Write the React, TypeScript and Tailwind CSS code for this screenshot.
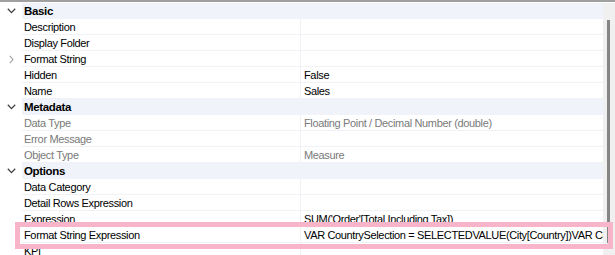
import { ReactNode } from "react"

type Row =
  | { kind: "group"; label: string }
  | { kind: "prop"; label: string; value?: string; muted?: boolean; expandable?: boolean }

const rows: Row[] = [
  { kind: "group", label: "Basic" },
  { kind: "prop", label: "Description" },
  { kind: "prop", label: "Display Folder" },
  { kind: "prop", label: "Format String", expandable: true },
  { kind: "prop", label: "Hidden", value: "False" },
  { kind: "prop", label: "Name", value: "Sales" },
  { kind: "group", label: "Metadata" },
  { kind: "prop", label: "Data Type", value: "Floating Point / Decimal Number (double)", muted: true },
  { kind: "prop", label: "Error Message", muted: true },
  { kind: "prop", label: "Object Type", value: "Measure", muted: true },
  { kind: "group", label: "Options" },
  { kind: "prop", label: "Data Category" },
  { kind: "prop", label: "Detail Rows Expression" },
  { kind: "prop", label: "Expression", value: "SUM('Order'[Total Including Tax])" },
  {
    kind: "prop",
    label: "Format String Expression",
    value: "VAR CountrySelection = SELECTEDVALUE(City[Country])VAR CountryFormat = ",
  },
  { kind: "prop", label: "KPI" },
]

function ChevronDown() {
  return (
    <svg width="9" height="6" viewBox="0 0 9 6" className="text-[#404040]">
      <path d="M0.8 0.8 L4.5 4.6 L8.2 0.8" fill="none" stroke="currentColor" strokeWidth="1.3" />
    </svg>
  )
}

function ChevronRight() {
  return (
    <svg width="5" height="9" viewBox="0 0 5 9" className="text-[#a0a0a0]">
      <path d="M0.8 0.8 L4 4.5 L0.8 8.2" fill="none" stroke="currentColor" strokeWidth="1.1" />
    </svg>
  )
}

function Gutter({ children }: { children?: ReactNode }) {
  return <div className="w-[22px] shrink-0 flex items-center justify-center bg-white">{children}</div>
}

export default function App() {
  return (
    <div
      className="relative w-[615px] h-[255px] overflow-hidden bg-white border-t-2 border-[#a0a0a0] pt-[1px] text-[11px] tracking-[-0.35px] leading-none text-black"
      style={{ fontFamily: '"Liberation Sans", Arial, sans-serif' }}
    >
      <div className="flex h-full">
        <div className="flex-1 min-w-0">
          {rows.map((r) =>
            r.kind === "group" ? (
              <div key={r.label} className="flex h-[16px]">
                <Gutter>
                  <ChevronDown />
                </Gutter>
                <div className="flex-1 bg-[#f0f4fa] flex items-center pl-[2px] pt-[2px] font-bold text-[11.5px]">
                  {r.label}
                </div>
              </div>
            ) : (
              <div key={r.label} className="flex h-[16px]">
                <Gutter>{r.expandable && <ChevronRight />}</Gutter>
                <div
                  className={`w-[279px] shrink-0 flex items-center pl-[2px] pt-[1px] border-b border-r border-[#f0f2f5] whitespace-nowrap ${
                    r.muted ? "text-[#7a7a7a]" : ""
                  }`}
                >
                  {r.label}
                </div>
                <div
                  className={`flex-1 min-w-0 flex items-center pl-[3px] pt-[1px] border-b border-[#f0f2f5] whitespace-nowrap overflow-hidden ${
                    r.muted ? "text-[#7a7a7a]" : ""
                  }`}
                >
                  {r.value}
                </div>
              </div>
            )
          )}
        </div>
        <div className="w-[12px] shrink-0 bg-[#f0f0f0] pt-[17px] pl-[4px]">
          <div className="w-[3px] h-[223px] bg-[#858585]" />
        </div>
      </div>
      <div className="absolute left-[15px] top-[220px] w-[598px] h-[27px] border-[5px] border-[#f8b4c8] pointer-events-none" />
    </div>
  )
}
